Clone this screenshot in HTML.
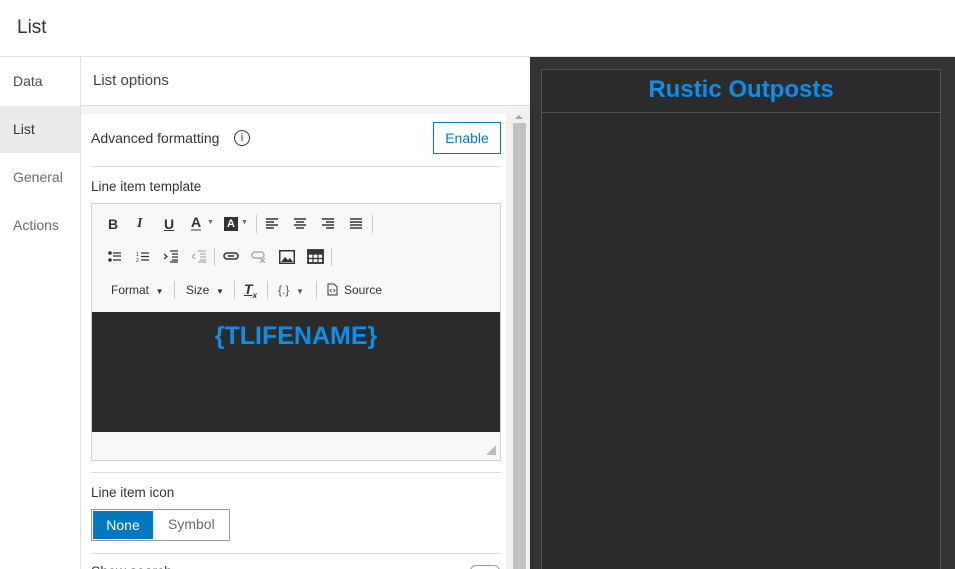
<!DOCTYPE html><html><head><style>
*{box-sizing:border-box;margin:0;padding:0}
html,body{width:955px;height:569px;overflow:hidden}
body{background:#fff;font-family:"Liberation Sans",sans-serif;position:relative;color:#323232}
.a{position:absolute}
.t{font-size:14px;color:#4a4a4a}
.ic{position:absolute;font-size:13px;color:#333;font-weight:bold}
.sep{position:absolute;width:1px;height:18px;background:#c8c8c8}
.ln{position:absolute;height:1px;background:#ddd}
svg.i{position:absolute}
</style></head><body>
<div class="a" style="left:17px;top:17px;font-size:19px;color:#333">List</div>
<div class="ln" style="left:0;top:56px;width:955px;background:#e0e0e0"></div>
<div class="a" style="left:80px;top:57px;width:1px;height:512px;background:#e0e0e0"></div>
<div class="a" style="left:0;top:106px;width:80px;height:47px;background:#eaeaea"></div>
<div class="a t" style="left:13px;top:73px">Data</div>
<div class="a t" style="left:13px;top:121px;color:#333">List</div>
<div class="a t" style="left:13px;top:169px;color:#6a6a6a">General</div>
<div class="a t" style="left:13px;top:217px;color:#6a6a6a">Actions</div>
<div class="a" style="left:93px;top:72px;font-size:15px;color:#444">List options</div>
<div class="ln" style="left:81px;top:105px;width:449px"></div>
<div class="a" style="left:81px;top:106px;width:425px;height:8px;background:#f4f4f4"></div>
<div class="a" style="left:506px;top:106px;width:24px;height:463px;background:#f1f1f1"></div>
<div class="a" style="left:513px;top:123px;width:13px;height:446px;background:#c1c1c1"></div>
<div class="a" style="left:515px;top:115px;width:0;height:0;border-left:4px solid transparent;border-right:4px solid transparent;border-bottom:4px solid #a3a3a3"></div>
<div class="a t" style="left:91px;top:130px;color:#333">Advanced formatting</div>
<div class="a" style="left:234px;top:130px;width:16px;height:16px;border:1.3px solid #333;border-radius:50%;font-size:11px;text-align:center;line-height:14px;color:#333">i</div>
<div class="a" style="left:433px;top:122px;width:68px;height:32px;border:1px solid #0079c1;color:#0079c1;font-size:14px;text-align:center;line-height:30px">Enable</div>
<div class="ln" style="left:91px;top:166px;width:410px"></div>
<div class="a t" style="left:91px;top:179px;color:#333;font-size:13.5px">Line item template</div>
<div class="a" style="left:91px;top:203px;width:410px;height:258px;border:1px solid #d1d1d1;background:#f8f8f8"></div>
<div class="ic" style="left:108px;top:216px;font-size:14px">B</div>
<div class="ic" style="left:137px;top:216px;font-size:14px;font-style:italic;font-family:'Liberation Serif',serif">I</div>
<div class="ic" style="left:164px;top:216px;font-size:14px;text-decoration:underline">U</div>
<div class="ic" style="left:191px;top:215px;font-size:14px;border-bottom:2px solid #999;line-height:14px">A</div><div class="ic" style="left:207px;top:219px;font-size:7px;color:#666">▼</div>
<div class="ic" style="left:224px;top:217px;width:14px;height:14px;background:#333;color:#fff;font-size:11px;text-align:center;line-height:14px">A</div><div class="ic" style="left:241px;top:219px;font-size:7px;color:#666">▼</div>
<div class="sep" style="left:256px;top:215px"></div>
<svg class="i" style="left:266px;top:218px" width="12" height="11"><path d="M0 1h12M0 4h8M0 7h12M0 10h8" stroke="#333" stroke-width="1.6"/></svg>
<svg class="i" style="left:294px;top:218px" width="12" height="11"><path d="M0 1h12M2 4h8M0 7h12M2 10h8" stroke="#333" stroke-width="1.6"/></svg>
<svg class="i" style="left:322px;top:218px" width="12" height="11"><path d="M0 1h12M4 4h8M0 7h12M4 10h8" stroke="#333" stroke-width="1.6"/></svg>
<svg class="i" style="left:350px;top:218px" width="12" height="11"><path d="M0 1h12M0 4h12M0 7h12M0 10h12" stroke="#333" stroke-width="1.6"/></svg>
<div class="sep" style="left:372px;top:215px"></div>
<svg class="i" style="left:108px;top:251px" width="14" height="11"><circle cx="2" cy="2" r="1.8" fill="#333"/><circle cx="2" cy="9" r="1.8" fill="#333"/><path d="M5 2h8M5 9h8M5 5h8" stroke="#333" stroke-width="1.3"/></svg>
<svg class="i" style="left:136px;top:251px" width="14" height="11"><text x="0" y="5" font-size="5" fill="#333">1</text><text x="0" y="11" font-size="5" fill="#333">2</text><path d="M5 2h8M5 9h8M5 5.5h8" stroke="#333" stroke-width="1.3"/></svg>
<svg class="i" style="left:164px;top:250px" width="14" height="13"><path d="M6 1h8M8 4h6M8 7h6M8 10h6M6 12h8M0 4l3 2.5-3 2.5" stroke="#333" stroke-width="1.2" fill="none"/></svg>
<svg class="i" style="left:192px;top:250px" width="14" height="13"><path d="M6 1h8M8 4h6M8 7h6M8 10h6M6 12h8M3 4l-3 2.5 3 2.5" stroke="#aaa" stroke-width="1.2" fill="none"/></svg>
<div class="sep" style="left:214px;top:248px"></div>
<svg class="i" style="left:223px;top:252px" width="16" height="8"><rect x="1" y="1" width="14" height="6" rx="3" stroke="#333" stroke-width="1.6" fill="none"/><path d="M5 4h6" stroke="#333" stroke-width="1.6"/></svg>
<svg class="i" style="left:251px;top:251px" width="16" height="12"><rect x="1" y="1" width="12" height="6" rx="3" stroke="#aaa" stroke-width="1.4" fill="none"/><path d="M9 7l5 5M14 7l-5 5" stroke="#aaa" stroke-width="1.3"/></svg>
<svg class="i" style="left:279px;top:250px" width="16" height="14"><rect x="0.75" y="0.75" width="14.5" height="12.5" stroke="#333" stroke-width="1.5" fill="#fff"/><path d="M2 12l4-5 3 3 2-2 3 4z" fill="#333"/></svg>
<svg class="i" style="left:307px;top:249px" width="17" height="15"><rect x="1" y="1" width="15" height="13" stroke="#333" stroke-width="1.8" fill="none"/><path d="M1 5h15M1 9.5h15M6 5v9M11 5v9" stroke="#333" stroke-width="1.2"/><rect x="1" y="1" width="15" height="4" fill="#333"/></svg>
<div class="sep" style="left:331px;top:248px"></div>
<div class="a" style="left:111px;top:283px;font-size:12px;color:#333">Format &nbsp;<span style="font-size:8px">▼</span></div>
<div class="sep" style="left:174px;top:281px"></div>
<div class="a" style="left:186px;top:283px;font-size:12px;color:#333">Size &nbsp;<span style="font-size:8px">▼</span></div>
<div class="sep" style="left:234px;top:281px"></div>
<div class="ic" style="left:244px;top:281px;font-size:14px;font-style:italic;text-decoration:underline">T<sub style="font-size:8px">x</sub></div>
<div class="sep" style="left:267px;top:281px"></div>
<div class="a" style="left:278px;top:283px;font-size:12px;color:#555">{.} &nbsp;<span style="font-size:8px">▼</span></div>
<div class="sep" style="left:316px;top:281px"></div>
<svg class="i" style="left:327px;top:283px" width="11" height="13"><path d="M1 1h6l3 3v8H1z" stroke="#333" fill="none"/><path d="M4.5 6l-1.5 1.5 1.5 1.5M6.5 6l1.5 1.5-1.5 1.5" stroke="#333" fill="none" stroke-width=".8"/></svg>
<div class="a" style="left:344px;top:283px;font-size:12px;color:#333">Source</div>
<div class="a" style="left:92px;top:312px;width:408px;height:120px;background:#2b2b2b"></div>
<div class="a" style="left:92px;top:322px;width:408px;text-align:center;font-size:25px;font-weight:bold;color:#0b8fec">{TLIFENAME}</div>
<div class="a" style="left:486px;top:445px;width:0;height:0;border-left:10px solid transparent;border-bottom:10px solid #bbb"></div>
<div class="ln" style="left:91px;top:472px;width:410px"></div>
<div class="a t" style="left:91px;top:485px;color:#333;font-size:13.5px">Line item icon</div>
<div class="a" style="left:91px;top:509px;width:139px;height:32px;border:1px solid #999"></div>
<div class="a" style="left:93px;top:511px;width:60px;height:28px;background:#0079c1;color:#fff;font-size:14px;text-align:center;line-height:28px">None</div>
<div class="a" style="left:168px;top:516px;font-size:14px;color:#6a6a6a">Symbol</div>
<div class="ln" style="left:91px;top:553px;width:410px"></div>
<div class="a t" style="left:91px;top:563px;color:#333">Show search</div>
<div class="a" style="left:470px;top:565px;width:30px;height:12px;border:1px solid #999;border-radius:6px"></div>
<div class="a" style="left:530px;top:57px;width:425px;height:512px;background:#333"></div>
<div class="a" style="left:541px;top:69px;width:400px;height:510px;border:1px solid #555;background:#2b2b2b"></div>
<div class="ln" style="left:541px;top:112px;width:400px;background:#555"></div>
<div class="a" style="left:541px;top:76px;width:400px;text-align:center;font-size:24px;font-weight:bold;color:#0b8fec">Rustic Outposts</div>
</body></html>
